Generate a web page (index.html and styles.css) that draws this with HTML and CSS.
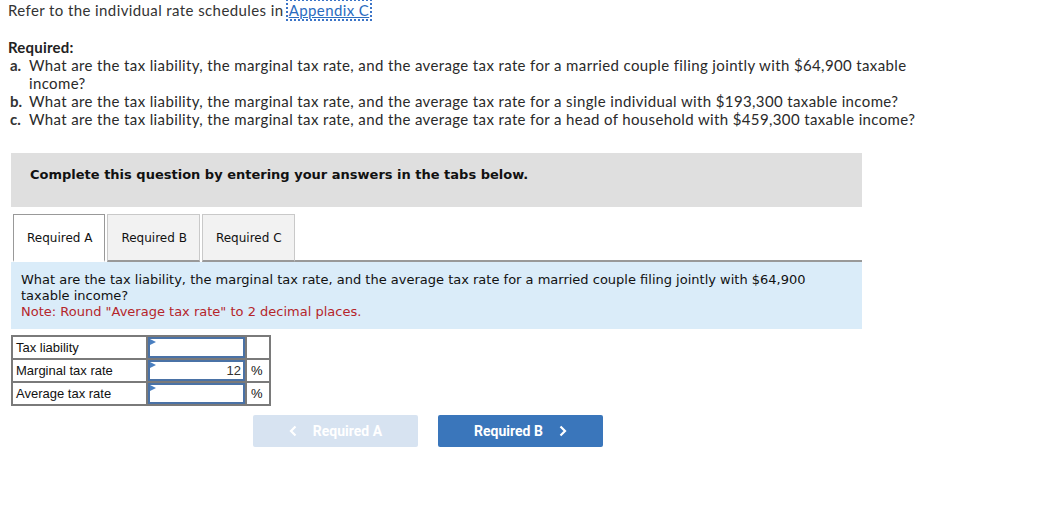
FILE: index.html
```html
<!DOCTYPE html>
<html>
<head>
<meta charset="utf-8">
<link rel="stylesheet" href="styles.css">
</head>
<body>
<div class="page">
  <p class="intro">Refer to the individual rate schedules in <a class="applink" href="#">Appendix C</a></p>
  <div class="required">
    <div class="req-title">Required:</div>
    <div class="req-item"><b>a.</b><span>What are the tax liability, the marginal tax rate, and the average tax rate for a married couple filing jointly with $64,900 taxable income?</span></div>
    <div class="req-item"><b>b.</b><span>What are the tax liability, the marginal tax rate, and the average tax rate for a single individual with $193,300 taxable income?</span></div>
    <div class="req-item"><b>c.</b><span>What are the tax liability, the marginal tax rate, and the average tax rate for a head of household with $459,300 taxable income?</span></div>
  </div>

  <div class="complete">Complete this question by entering your answers in the tabs below.</div>

  <div class="tabs">
    <div class="tab active">Required A</div>
    <div class="tab">Required B</div>
    <div class="tab">Required C</div>
    <div class="tab-rest"></div>
  </div>

  <div class="panel">
    <div>What are the tax liability, the marginal tax rate, and the average tax rate for a married couple filing jointly with $64,900 taxable income?</div>
    <div class="note">Note: Round "Average tax rate" to 2 decimal places.</div>
  </div>

  <table class="answers">
    <tr><td class="lbl">Tax liability</td><td class="inp"><div class="box"></div></td><td class="unit"></td></tr>
    <tr><td class="lbl">Marginal tax rate</td><td class="inp"><div class="box">12</div></td><td class="unit">%</td></tr>
    <tr><td class="lbl">Average tax rate</td><td class="inp"><div class="box"></div></td><td class="unit">%</td></tr>
  </table>

  <div class="nav">
    <button class="btn prev"><svg class="chev" width="8" height="12" viewBox="0 0 8 12"><path d="M6.5 1.5 L2 6 L6.5 10.5" fill="none" stroke="#fff" stroke-width="2.2"/></svg>Required A</button>
    <button class="btn next">Required B<svg class="chev" width="8" height="12" viewBox="0 0 8 12"><path d="M1.5 1.5 L6 6 L1.5 10.5" fill="none" stroke="#fff" stroke-width="2.2"/></svg></button>
  </div>
</div>
</body>
</html>
```

FILE: styles.css
```css
html, body { margin: 0; padding: 0; background: #fff; }
.page { padding: 0 0 0 8px; width: 920px; font-family: "Lato", "Liberation Sans", sans-serif; color: #222; }

.intro { margin: 0; padding-top: 1px; font-size: 15px; line-height: 18px; color: #333; letter-spacing: 0.4px; }
.applink { color: #2a6cbf; text-decoration: underline; outline: 2px dotted #3b74c7; outline-offset: 0; padding: 0 1px; }

.required { margin-top: 19px; font-size: 15px; line-height: 18px; color: #2a2a2a; letter-spacing: 0.37px; }
.req-title { font-weight: bold; color: #222; letter-spacing: 0.2px; }
.req-item { display: flex; padding-left: 2px; }
.req-item b { width: 19px; flex: none; color: #333; letter-spacing: 0; }
.req-item span { width: 890px; }

.complete { margin: 25px 0 0 3px; background: #dfdfdf; height: 54px; padding: 14px 0 0 19px; box-sizing: border-box; width: 851px;
  font-family: "DejaVu Sans", Verdana, sans-serif; font-weight: bold; font-size: 13px; line-height: 16px; color: #111; }

.tabs { display: flex; margin: 7px 0 0 5px; height: 48px; width: 849px; font-family: "DejaVu Sans", Verdana, sans-serif; font-size: 12px; color: #111; white-space: nowrap; }
.tab { box-sizing: border-box; height: 48px; border: 1px solid #c9c9c9; border-bottom: 2px solid #999; padding: 0 12px 0 13px; display: flex; align-items: center; background: #f2f2f2; margin-right: 2px; }
.tab.active { background: #fff; border-color: #999; border-bottom: 2px solid #fff; }
.tab-rest { flex: 1; border-bottom: 2px solid #999; margin-left: -2px; }

.panel { margin-left: 3px; width: 851px; box-sizing: border-box; background: #daecf9; padding: 10px 10px 9px; font-family: "DejaVu Sans", Verdana, sans-serif; font-size: 13px; line-height: 16px; color: #111; }
.panel div:first-child { width: 800px; }
.note { color: #b5262b; }

.answers { margin: 6px 0 0 3px; border-collapse: collapse; font-family: "Liberation Sans", Arial, sans-serif; font-size: 13px; color: #111; }
.answers td { border: 2px solid #7a7a7a; height: 19px; padding: 0; }
.answers .lbl { width: 130px; padding-left: 3px; }
.answers .inp { width: 97px; padding: 0; }
.answers .unit { width: 18px; padding-left: 4px; }
.box { position: relative; box-sizing: border-box; height: 21px; border: 2px solid #4a72a6; text-align: right; padding-right: 2px; line-height: 17px; color: #333; }
.box::before { content: ""; position: absolute; left: 0; top: 0; border-left: 6px solid #4a7fc0; border-top: 3px solid transparent; border-bottom: 3px solid transparent; }

.nav { display: flex; gap: 20px; margin: 9px 0 0 245px; }
.btn { width: 165px; height: 32px; border: none; border-radius: 2px; font-family: "Roboto", "Liberation Sans", sans-serif; font-weight: bold; font-size: 14px; color: #fff; display: flex; align-items: center; justify-content: center; padding: 0; }
.btn.prev { background: #d7e3f1; }
.btn.next { background: #3a76bb; }
.prev .chev { margin-right: 16px; }
.next .chev { margin-left: 16px; }
```
